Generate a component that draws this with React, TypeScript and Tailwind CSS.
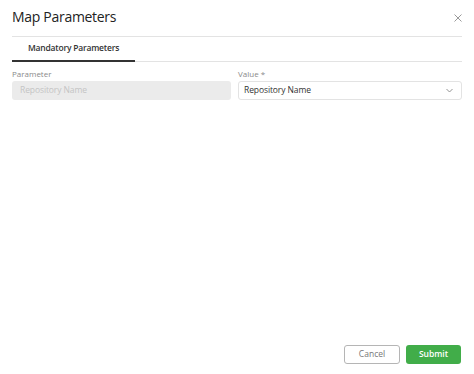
import React from "react";

export default function App() {
  return (
    <div className="w-[474px] h-[374px] bg-white flex flex-col px-3 relative" style={{ fontFamily: '"Open Sans", sans-serif' }}>
      <div className="flex items-center justify-between h-[37px] border-b border-[#e3e3e3]">
        <div className="text-[14px] leading-none font-medium tracking-[-0.3px] text-[#222] pb-[2px]">Map Parameters</div>
        <svg width="8" height="8" viewBox="0 0 8 8" className="mb-[1px]">
          <path d="M0.5 0.5 L7.5 7.5 M7.5 0.5 L0.5 7.5" stroke="#9a9a9a" strokeWidth="1" />
        </svg>
      </div>
      <div className="flex h-[25px] border-b border-[#e3e3e3]">
        <div className="w-[123px] h-[25px] flex items-center justify-center border-b-2 border-[#333] text-[8.5px] tracking-[-0.2px] font-semibold text-[#333]">
          Mandatory Parameters
        </div>
      </div>
      <div className="flex gap-[7px] mt-[8px]">
        <div className="flex-1 flex flex-col">
          <div className="text-[8px] text-[#8a8a8a] leading-none h-[11px]">Parameter</div>
          <div className="h-[19px] rounded-[3px] bg-[#ebebeb] flex items-center pl-[8px] text-[8.5px] tracking-[-0.1px] text-[#c4c4c4]">Repository Name</div>
        </div>
        <div className="w-[224px] flex flex-col">
          <div className="text-[8px] text-[#8a8a8a] leading-none h-[11px]">Value *</div>
          <div className="h-[19px] rounded-[3px] border border-[#e3e3e3] flex items-center justify-between pl-[5px] pr-[8px] text-[8.5px] tracking-[-0.1px] text-[#333]">
            <span>Repository Name</span>
            <svg width="7" height="5" viewBox="0 0 7 5">
              <path d="M0.5 1 L3.5 4 L6.5 1" stroke="#888" strokeWidth="0.9" fill="none" />
            </svg>
          </div>
        </div>
      </div>
      <div className="flex-1" />
      <div className="flex justify-end gap-[6px] mb-[10px] pr-[1px]">
        <button className="w-[56px] h-[19px] rounded-[3px] border border-[#b5b5b5] bg-white text-[8.5px] text-[#777]">Cancel</button>
        <button className="w-[55px] h-[19px] rounded-[3px] bg-[#41ad49] text-[8.5px] font-semibold text-white">Submit</button>
      </div>
    </div>
  );
}
